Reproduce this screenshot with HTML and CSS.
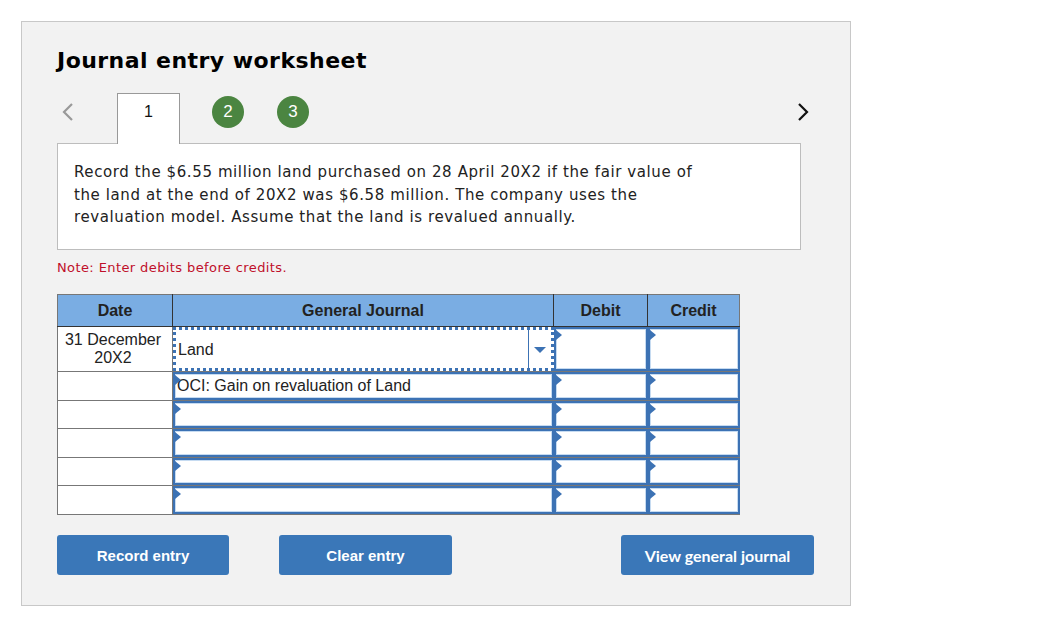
FILE: index.html
```html
<!DOCTYPE html>
<html>
<head>
<meta charset="utf-8">
<link rel="stylesheet" href="styles.css">
</head>
<body>
<div class="panel">
  <h1 class="title">Journal entry worksheet</h1>
  <div class="tabs">
    <svg class="nav prev" width="12" height="20" viewBox="0 0 12 20"><path d="M10 2 L2 10 L10 18" fill="none" stroke="#999" stroke-width="2.2"/></svg>
    <div class="tab active">1</div>
    <div class="step">2</div>
    <div class="step">3</div>
    <svg class="nav next" width="12" height="20" viewBox="0 0 12 20"><path d="M2 2 L10 10 L2 18" fill="none" stroke="#111" stroke-width="2.2"/></svg>
  </div>
  <div class="desc">Record the $6.55 million land purchased on 28 April 20X2 if the fair value of the land at the end of 20X2 was $6.58 million. The company uses the revaluation model. Assume that the land is revalued annually.</div>
  <p class="note">Note: Enter debits before credits.</p>
  <table class="journal">
    <thead>
      <tr>
        <th class="c-date">Date</th>
        <th class="c-gj">General Journal</th>
        <th class="c-dr">Debit</th>
        <th class="c-cr">Credit</th>
      </tr>
    </thead>
    <tbody>
      <tr class="r-first">
        <td class="date">31 December<br>20X2</td>
        <td class="cell"><div class="select"><span class="val">Land</span><span class="arrowbox"><span class="arrow"></span></span></div></td>
        <td class="cell"><div class="field mark tall"></div></td>
        <td class="cell"><div class="field mark tall"></div></td>
      </tr>
      <tr>
        <td class="date"></td>
        <td class="cell"><div class="field mark"><span class="val">OCI: Gain on revaluation of Land</span></div></td>
        <td class="cell"><div class="field mark"></div></td>
        <td class="cell"><div class="field mark"></div></td>
      </tr>
      <tr>
        <td class="date"></td>
        <td class="cell"><div class="field mark"></div></td>
        <td class="cell"><div class="field mark"></div></td>
        <td class="cell"><div class="field mark"></div></td>
      </tr>
      <tr>
        <td class="date"></td>
        <td class="cell"><div class="field mark"></div></td>
        <td class="cell"><div class="field mark"></div></td>
        <td class="cell"><div class="field mark"></div></td>
      </tr>
      <tr>
        <td class="date"></td>
        <td class="cell"><div class="field mark"></div></td>
        <td class="cell"><div class="field mark"></div></td>
        <td class="cell"><div class="field mark"></div></td>
      </tr>
      <tr>
        <td class="date"></td>
        <td class="cell"><div class="field mark"></div></td>
        <td class="cell"><div class="field mark"></div></td>
        <td class="cell"><div class="field mark"></div></td>
      </tr>
    </tbody>
  </table>
  <div class="actions">
    <button class="btn b-record">Record entry</button>
    <button class="btn b-clear">Clear entry</button>
    <button class="btn b-view">View general journal</button>
  </div>
</div>
</body>
</html>
```
FILE: styles.css
```css
html, body {
  margin: 0;
  padding: 0;
  background: #fff;
}
body {
  padding: 21px 0 0 21px;
  font-family: "DejaVu Sans", Verdana, sans-serif;
  color: #222;
}
.panel {
  width: 793px;
  height: 561px;
  background: #f2f2f2;
  border: 1px solid #c8c8c8;
  padding: 22px 0 0 35px;
}
.title {
  margin: 0;
  font-family: "DejaVu Sans", Verdana, sans-serif;
  font-weight: bold;
  font-size: 22px;
  line-height: 33px;
  color: #000;
  letter-spacing: 0.45px;
}
.tabs {
  display: flex;
  align-items: flex-start;
  margin-top: 16px;
  height: 50px;
  width: 743px;
}
.nav {
  margin-top: 9px;
}
.prev {
  margin-left: 5px;
}
.next {
  margin-left: auto;
  margin-right: -9px;
}
.tab {
  box-sizing: border-box;
  width: 63px;
  height: 51px;
  margin-left: 43px;
  background: #fff;
  border: 1px solid #999;
  border-bottom: none;
  font-family: "Liberation Sans", Arial, sans-serif;
  font-size: 16px;
  text-align: center;
  line-height: 36px;
  color: #111;
  position: relative;
  z-index: 1;
}
.step {
  width: 32px;
  height: 32px;
  border-radius: 50%;
  background: #4b8541;
  color: #fff;
  font-family: "Liberation Sans", Arial, sans-serif;
  font-size: 17px;
  line-height: 32px;
  text-align: center;
  margin-top: 3px;
}
.tab + .step {
  margin-left: 32px;
}
.step + .step {
  margin-left: 33px;
}
.desc {
  box-sizing: border-box;
  width: 744px;
  height: 107px;
  background: #fff;
  border: 1px solid #bdbdbd;
  padding: 17px 86px 0 16px;
  font-size: 15px;
  line-height: 22.5px;
  letter-spacing: 0.6px;
  color: #222;
}
.note {
  margin: 9px 0 0 0;
  font-size: 13px;
  line-height: 18px;
  letter-spacing: 0.4px;
  color: #c0102a;
}
.journal {
  margin-top: 17px;
  border-collapse: collapse;
  table-layout: fixed;
  width: 680px;
  font-family: "Liberation Sans", Arial, sans-serif;
  font-size: 16px;
}
.journal th {
  height: 31px;
  padding: 0;
  background: #7aade3;
  font-weight: bold;
  color: #222;
  border: 1px solid #333;
  border-top-color: #777;
  text-align: center;
}
.journal th.c-date { width: 114px; border-left-color: #777; }
.journal th.c-gj { width: 380px; }
.journal th.c-dr { width: 93px; }
.journal th.c-cr { width: 91px; border-right-color: #777; }
.journal td {
  padding: 0;
  vertical-align: top;
}
.journal td.date {
  background: #fff;
  border: 1px solid #777;
  text-align: center;
  line-height: 18px;
  color: #222;
  height: 27px;
}
.r-first td.date {
  height: 44px;
  vertical-align: top;
  padding: 4px 4px 0 0;
  box-sizing: border-box;
}
.journal td.cell {
  border-bottom: 1px solid #777;
}
.field {
  position: relative;
  box-sizing: border-box;
  height: 27.6px;
  background: #fff;
  border: 2px solid #3c72b4;
  box-shadow: inset 0 0 0 1px #c6dbf1;
  padding-left: 2px;
  line-height: 24px;
}
.field.tall {
  height: 44px;
}
.mark::before {
  content: "";
  position: absolute;
  left: 0;
  top: 1px;
  border-top: 5px solid transparent;
  border-bottom: 5px solid transparent;
  border-left: 6px solid #3c72b4;
}
.val {
  color: #222;
}
.select {
  box-sizing: border-box;
  height: 44px;
  display: flex;
  align-items: center;
  background: #fff;
  border: 3px dotted #3c72b4;
  padding-left: 2px;
}
.select .val {
  flex: 1;
  padding-top: 2px;
}
.arrowbox {
  width: 22px;
  height: 39px;
  border-left: 1px solid #3c72b4;
  display: flex;
  align-items: center;
  justify-content: center;
  align-self: flex-start;
}
.arrow {
  width: 0;
  height: 0;
  border-left: 6px solid transparent;
  border-right: 6px solid transparent;
  border-top: 6px solid #3c72b4;
}
.actions {
  display: flex;
  width: 757px;
  margin-top: 20px;
  gap: 50px;
}
.btn {
  height: 40px;
  border: none;
  border-radius: 3px;
  background: #3a77b8;
  color: #fff;
  font-family: "Liberation Sans", Arial, sans-serif;
  font-weight: bold;
  font-size: 15px;
  padding: 2px 0 0 0;
}
.b-record { width: 172px; }
.b-clear { width: 173px; }
.b-view {
  width: 193px;
  margin-left: auto;
  font-family: Lato, "Liberation Sans", sans-serif;
  font-size: 16px;
}
```
